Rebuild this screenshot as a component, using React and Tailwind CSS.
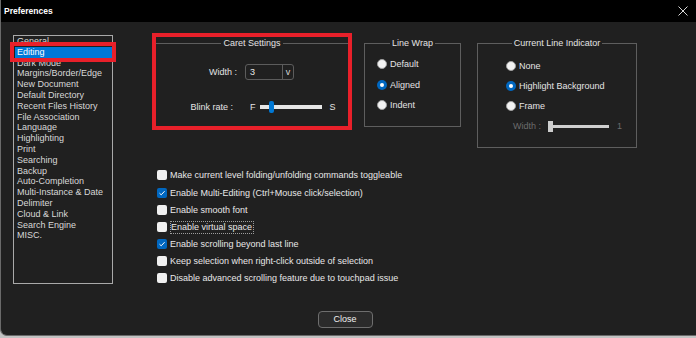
import { useState } from "react";

const pages = [
	"General",
	"Editing",
	"Dark Mode",
	"Margins/Border/Edge",
	"New Document",
	"Default Directory",
	"Recent Files History",
	"File Association",
	"Language",
	"Highlighting",
	"Print",
	"Searching",
	"Backup",
	"Auto-Completion",
	"Multi-Instance & Date",
	"Delimiter",
	"Cloud & Link",
	"Search Engine",
	"MISC.",
];

const options = [
	{ label: "Make current level folding/unfolding commands toggleable", checked: false },
	{ label: "Enable Multi-Editing (Ctrl+Mouse click/selection)", checked: true },
	{ label: "Enable smooth font", checked: false },
	{ label: "Enable virtual space", checked: false, focus: true },
	{ label: "Enable scrolling beyond last line", checked: true },
	{ label: "Keep selection when right-click outside of selection", checked: false },
	{ label: "Disable advanced scrolling feature due to touchpad issue", checked: false },
];

function Radio({ checked, label }) {
	return (
		<div className="flex items-center h-[12px]">
			{checked ? (
				<span className="w-[10px] h-[10px] rounded-full bg-[#0067c0] flex items-center justify-center">
					<span className="w-[4px] h-[4px] rounded-full bg-white" />
				</span>
			) : (
				<span className="w-[10px] h-[10px] rounded-full bg-[#f2f2f2] border border-[#a0a0a0]" />
			)}
			<span className="ml-[3px] text-[#e4e4e4]">{label}</span>
		</div>
	);
}

function Checkbox({ checked, label, focus }) {
	return (
		<div className="flex items-center h-[17px]">
			{checked ? (
				<span className="w-[10px] h-[10px] rounded-[2px] bg-[#0067c0] flex items-center justify-center">
					<svg width="8" height="8" viewBox="0 0 8 8">
						<path d="M1.5 4.2 L3.2 5.8 L6.6 2.2" stroke="#ffffff" strokeWidth="1" fill="none" />
					</svg>
				</span>
			) : (
				<span className="w-[10px] h-[10px] rounded-[2px] bg-[#f0f0f0]" />
			)}
			{focus ? (
				<span className="ml-[3px] text-[#e8e8e8] border border-dotted border-[#9c9c9c] leading-[11px] pr-[1px]">{label}</span>
			) : (
				<span className="ml-[3px] text-[#e8e8e8]">{label}</span>
			)}
		</div>
	);
}

export default function App() {
	const [selected] = useState(1);

	return (
		<div className="w-[696px] h-[338px] bg-[#c2c2c2] font-['Liberation_Sans',Arial,sans-serif] text-[9px] leading-[12px]">
			<div className="w-[696px] h-[336px] flex flex-col border-l border-b border-[#6a6a6a] rounded-bl-[7px] overflow-hidden bg-[#202020]">
				{/* Title bar */}
				<div className="h-[22px] bg-black flex items-center justify-between pl-[3px] pr-[8px] shrink-0">
					<span className="text-white font-bold text-[8.5px]">Preferences</span>
					<svg width="10" height="10" viewBox="0 0 10 10">
						<path d="M0.5 0.5 L9.5 9.5 M9.5 0.5 L0.5 9.5" stroke="#d8d8d8" strokeWidth="1" />
					</svg>
				</div>

				{/* Body */}
				<div className="flex-1 flex flex-col">
					<div className="flex pt-[11px]">
						{/* Page list */}
						<div className="relative ml-[12px] mt-[2px] w-[100px] h-[249px] border border-[#a9a9a9] shrink-0">
							<div className="h-full overflow-hidden">
								{pages.map((p, i) => (
									<div
										key={p}
										className={`h-[10.8px] leading-[10.8px] pl-[2px] ml-px ${
											i === selected ? "bg-[#0078d7] text-white" : "text-[#d8d8d8]"
										}`}
									>
										{p}
									</div>
								))}
							</div>
							<div className="absolute left-[-4px] top-[6px] w-[106px] h-[20px] border-[4px] border-[#e8202a]" />
						</div>

						{/* Settings */}
						<div className="ml-[39px] flex flex-col">
							<div className="flex items-start">
								{/* Caret Settings */}
								<div className="w-[200px] h-[97px] border-[4px] border-[#e8202a]">
									<fieldset className="h-full border-t border-[#5e5e5e]">
										<legend className="mx-auto px-[2px] text-[#e4e4e4] leading-[12px]">Caret Settings</legend>
										<div className="flex items-center mt-[15px] h-[16px]">
											<span className="w-[81px] text-right text-[#e4e4e4]">Width :</span>
											<div className="ml-[8px] w-[49px] h-[16px] border border-[#5c5c5c] rounded-[3px] flex">
												<span className="w-[36px] pl-[4px] text-[#e8e8e8] leading-[14px]">3</span>
												<span className="flex-1 border-l border-[#5c5c5c] text-center text-[#d8d8d8] leading-[14px]">v</span>
											</div>
										</div>
										<div className="flex items-center mt-[21px] h-[12px]">
											<span className="w-[77px] text-right text-[#e4e4e4]">Blink rate :</span>
											<span className="ml-[17px] text-[#e4e4e4]">F</span>
											<div className="relative ml-[4px] w-[62px] h-[4px] bg-[#e6e6e6]">
												<span className="absolute left-[9px] top-[-4px] w-[5px] h-[12px] rounded-[2px] bg-[#0078d4]" />
											</div>
											<span className="ml-[8px] text-[#e4e4e4]">S</span>
										</div>
									</fieldset>
								</div>

								{/* Line Wrap */}
								<fieldset className="ml-[12px] mt-[4px] w-[97px] h-[90px] border border-[#5e5e5e]">
									<legend className="mx-auto px-[2px] text-[#e4e4e4] leading-[12px]">Line Wrap</legend>
									<div className="flex flex-col gap-[8.5px] pl-[12px] mt-[9px]">
										<Radio label="Default" />
										<Radio label="Aligned" checked />
										<Radio label="Indent" />
									</div>
								</fieldset>

								{/* Current Line Indicator */}
								<fieldset className="ml-[16px] mt-[4px] w-[160px] h-[111px] border border-[#5e5e5e]">
									<legend className="mx-auto px-[2px] text-[#e4e4e4] leading-[12px]">Current Line Indicator</legend>
									<div className="flex flex-col gap-[8px] pl-[28px] mt-[11px]">
										<Radio label="None" />
										<Radio label="Highlight Background" checked />
										<Radio label="Frame" />
										<div className="flex items-center h-[12px] pl-[7px]">
											<span className="text-[#6c6c6c]">Width :</span>
											<div className="relative ml-[7px] w-[61px] h-[3px] bg-[#cfcfcf]">
												<span className="absolute left-0 top-[-4px] w-[5px] h-[11px] bg-[#cdcdcd]" />
											</div>
											<span className="ml-[8px] text-[#6c6c6c]">1</span>
										</div>
									</div>
								</fieldset>
							</div>

							{/* Checkboxes */}
							<div className="flex flex-col mt-[18px] ml-[5px]">
								{options.map((o, i) => (
									<div key={o.label} className={i === 0 ? "mb-[1.5px]" : ""}>
										<Checkbox {...o} />
									</div>
								))}
							</div>
						</div>
					</div>

					{/* Footer */}
					<div className="mt-auto flex justify-center pr-[7px] pb-[7px]">
						<button className="w-[55px] h-[17px] border border-[#6e6e6e] rounded-[4px] bg-[#2b2b2b] text-[#f0f0f0] leading-[15px]">
							Close
						</button>
					</div>
				</div>
			</div>
		</div>
	);
}
